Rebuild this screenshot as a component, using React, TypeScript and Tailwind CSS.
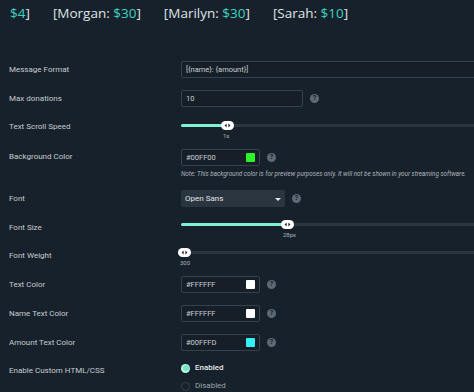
import React from "react";

const donors = [
  { name: null, amount: "$4" },
  { name: "Morgan", amount: "$30" },
  { name: "Marilyn", amount: "$30" },
  { name: "Sarah", amount: "$10" },
];

function Help() {
  return (
    <span className="ml-[7px] flex h-[9px] w-[9px] shrink-0 items-center justify-center rounded-full bg-[#5f6973] text-[7px] font-bold leading-none text-[#17212b]">
      ?
    </span>
  );
}

function Handle() {
  return (
    <svg width="13" height="9" viewBox="0 0 13 9" className="block">
      <rect x="0" y="0" width="13" height="9" rx="4.5" fill="#ffffff" />
      <path d="M5.6 2.6 L3.6 4.5 L5.6 6.4 Z" fill="#17212b" />
      <path d="M7.4 2.6 L9.4 4.5 L7.4 6.4 Z" fill="#17212b" />
    </svg>
  );
}

function Slider({ pos, value }: { pos: number; value: string }) {
  return (
    <div className="relative h-[9px] w-[300px]">
      <div className="absolute left-0 right-0 top-[3px] h-[3px] rounded-full bg-[#2a3540]" />
      <div className="absolute left-0 top-[3px] h-[3px] rounded-full bg-[#7ff0d2]" style={{ width: pos }} />
      <div className="absolute top-0" style={{ left: pos - 6 }}>
        <Handle />
      </div>
      <div className="absolute top-[10px] text-[6px] text-[#aab1b8]" style={{ left: pos - 4 }}>
        {value}
      </div>
    </div>
  );
}

function ColorInput({ value, swatch }: { value: string; swatch: string }) {
  return (
    <div className="flex items-center">
      <div className="flex h-[17px] w-[79px] items-center justify-between rounded-[2px] border border-[#36414c] bg-[#161f28] pl-[4px] pr-[4px]">
        <span className="text-[7.5px] text-[#c9ced3]">{value}</span>
        <span className="h-[9px] w-[9px] rounded-[1px]" style={{ background: swatch }} />
      </div>
      <Help />
    </div>
  );
}

const labelCls = "w-[181px] shrink-0 whitespace-nowrap pl-[9px] text-[8px] text-[#c6cbd0]";

function Row({ label, h, children }: { label: string; h: string; children: React.ReactNode }) {
  return (
    <div className={`flex items-center ${h}`}>
      <div className={labelCls}>{label}</div>
      <div className="min-w-0 flex-1">{children}</div>
    </div>
  );
}

export default function App() {
  return (
    <div
      className="h-[392px] w-[474px] overflow-hidden bg-[#17212b]"
      style={{ fontFamily: "Roboto, 'Liberation Sans', sans-serif" }}
    >
      <div
        className="flex h-[55px] items-start gap-[23px] pl-[10px] pt-[3px] text-[13.5px] text-[#dfe3e6]"
        style={{ fontFamily: "'Open Sans', sans-serif" }}
      >
        {donors.map((d, i) => (
          <span key={i} className="whitespace-nowrap">
            {d.name ? `[${d.name}: ` : ""}
            <span className="text-[#3fd3c1]">{d.amount}</span>]
          </span>
        ))}
      </div>

      <Row label="Message Format" h="h-[29px]">
        <div className="flex h-[17px] w-[320px] items-center rounded-[2px] border border-[#36414c] bg-[#161f28] pl-[4px] text-[7.5px] text-[#c9ced3]">
          {"[{name}: {amount}]"}
        </div>
      </Row>

      <Row label="Max donations" h="h-[29px]">
        <div className="flex items-center">
          <div className="flex h-[17px] w-[122px] items-center rounded-[2px] border border-[#36414c] bg-[#161f28] pl-[4px] text-[7.5px] text-[#c9ced3]">
            10
          </div>
          <Help />
        </div>
      </Row>

      <div className="flex h-[28px] items-start">
        <div className={`${labelCls} pt-[8px]`}>Text Scroll Speed</div>
        <div className="pt-[8px]">
          <Slider pos={46} value="1s" />
        </div>
      </div>

      <div className="flex h-[43px] items-start pt-[8px]">
        <div className={`${labelCls} pt-[2px]`}>Background Color</div>
        <div>
          <ColorInput value="#00FF00" swatch="#2ff12a" />
          <div className="mt-[4px] whitespace-nowrap text-[6.3px] italic text-[#aeb5bc]">
            Note: This background color is for preview purposes only. It will not be shown in your streaming software.
          </div>
        </div>
      </div>

      <Row label="Font" h="h-[29px]">
        <div className="flex items-center">
          <div className="flex h-[17px] w-[104px] items-center justify-between rounded-[2px] bg-[#2a3540] pl-[4px] pr-[4px] text-[8px] text-[#e2e5e8]">
            <span>Open Sans</span>
            <span className="mt-[1px] h-0 w-0 border-l-[3px] border-r-[3px] border-t-[3px] border-l-transparent border-r-transparent border-t-[#e2e5e8]" />
          </div>
          <Help />
        </div>
      </Row>

      <div className="flex h-[28px] items-start">
        <div className={`${labelCls} pt-[9px]`}>Font Size</div>
        <div className="pt-[7px]">
          <Slider pos={106} value="28px" />
        </div>
      </div>

      <div className="flex h-[29px] items-start">
        <div className={`${labelCls} pt-[9px]`}>Font Weight</div>
        <div className="-ml-[3px] pt-[7px]">
          <Slider pos={6} value="300" />
        </div>
      </div>

      <Row label="Text Color" h="h-[29px]">
        <ColorInput value="#FFFFFF" swatch="#ffffff" />
      </Row>
      <Row label="Name Text Color" h="h-[29px]">
        <ColorInput value="#FFFFFF" swatch="#ffffff" />
      </Row>
      <Row label="Amount Text Color" h="h-[29px]">
        <ColorInput value="#00FFFD" swatch="#33f2f5" />
      </Row>

      <div className="flex items-start pt-[5px]">
        <div className={`${labelCls} pt-[3px]`}>Enable Custom HTML/CSS</div>
        <div className="flex flex-col gap-[6px]">
          <div className="flex items-center gap-[5px] text-[8px] font-medium text-[#e6e9ec]">
            <span className="flex h-[9px] w-[9px] items-center justify-center rounded-full bg-[#bff5e6]">
              <span className="h-[6px] w-[6px] rounded-full bg-[#73e6c6]" />
            </span>
            Enabled
          </div>
          <div className="flex items-center gap-[5px] text-[8px] text-[#9aa2aa]">
            <span className="h-[9px] w-[9px] rounded-full border border-[#36414c]" />
            Disabled
          </div>
        </div>
      </div>
    </div>
  );
}
